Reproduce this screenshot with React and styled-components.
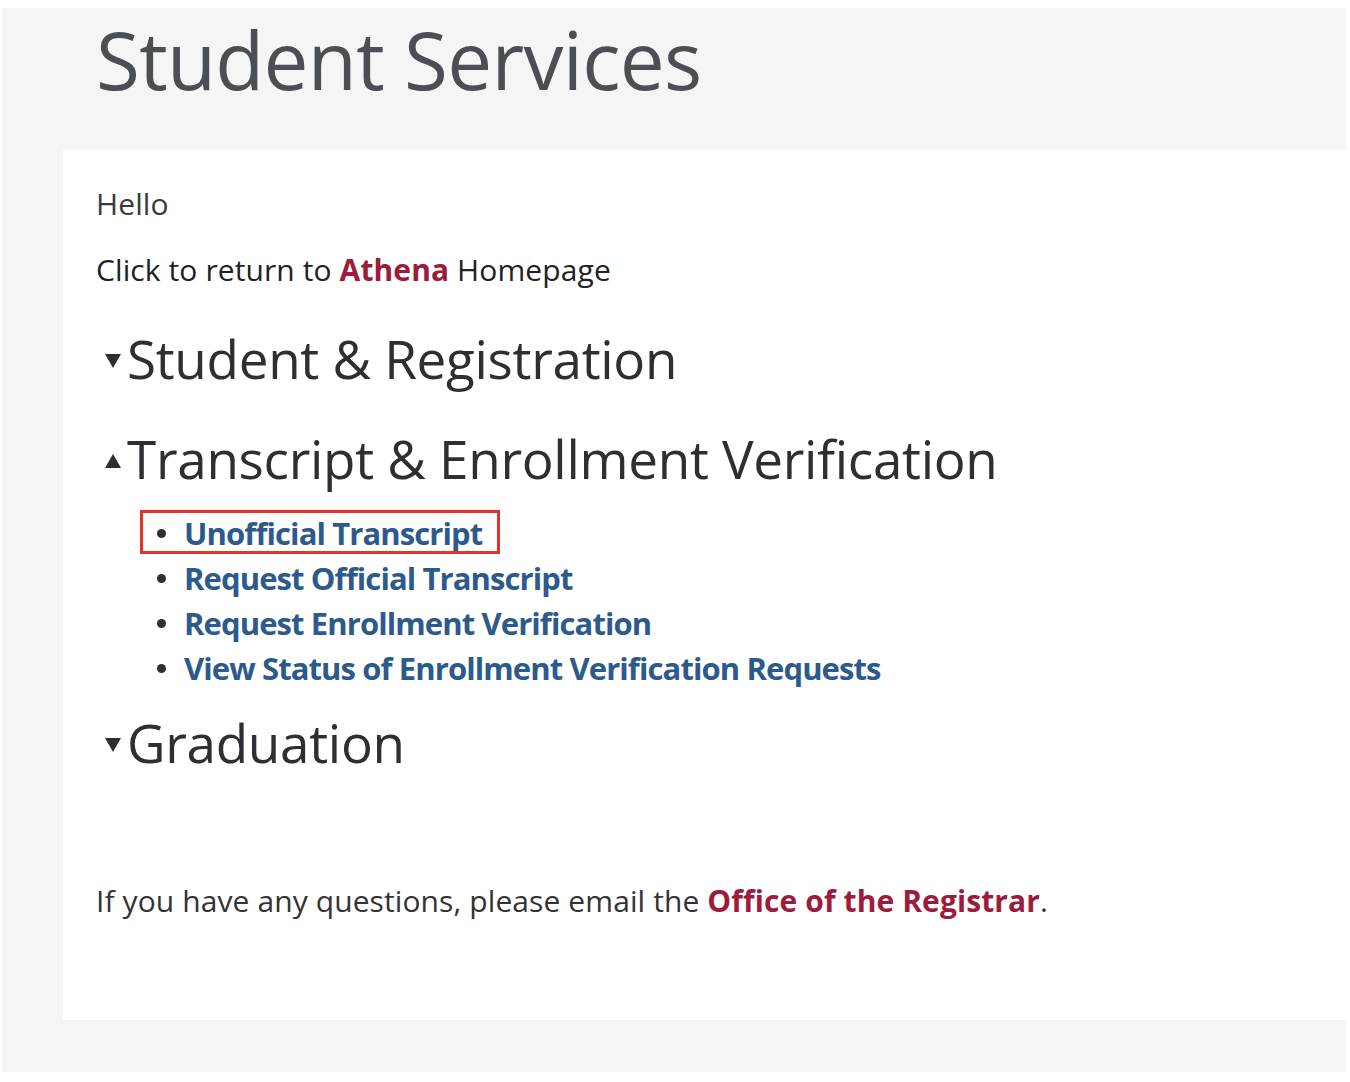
import React from "react";
import styled, { createGlobalStyle } from "styled-components";

const GlobalStyle = createGlobalStyle`
  body {
    margin: 0;
    background: #ffffff;
    font-family: "Open Sans", "Noto Sans", sans-serif;
  }
`;

const links = [
  "Unofficial Transcript",
  "Request Official Transcript",
  "Request Enrollment Verification",
  "View Status of Enrollment Verification Requests",
];

function App() {
  return (
    <>
      <GlobalStyle />
      <Shell>
        <Header>
          <Title>Student Services</Title>
        </Header>
        <Panel>
          <Greeting>Hello</Greeting>
          <Line>
            Click to return to <RedLink href="#">Athena</RedLink> Homepage
          </Line>
          <Section $gap={34}>
            <SectionHead>
              <Caret $open={false} />
              Student &amp; Registration
            </SectionHead>
          </Section>
          <Section $gap={30}>
            <SectionHead>
              <Caret $open />
              Transcript &amp; Enrollment Verification
            </SectionHead>
            <LinkList>
              {links.map((l, i) => (
                <LinkItem key={l} $marked={i === 0}>
                  <BlueLink href="#">{l}</BlueLink>
                </LinkItem>
              ))}
            </LinkList>
          </Section>
          <Section $gap={18}>
            <SectionHead>
              <Caret $open={false} />
              Graduation
            </SectionHead>
          </Section>
          <Footer>
            If you have any questions, please email the{" "}
            <RedLink href="#">Office of the Registrar</RedLink>.
          </Footer>
        </Panel>
      </Shell>
    </>
  );
}

const Shell = styled.div`
  margin: 8px 4px 0 2px;
  height: 1064px;
  background-color: #f4f6f5;
  display: flex;
  flex-direction: column;
`;

const Header = styled.div`
  height: 142px;
  padding-left: 94px;
  box-sizing: border-box;
`;

const Title = styled.h1`
  margin: 0;
  padding-top: 1px;
  font-size: 80px;
  font-weight: 400;
  line-height: 100px;
  color: #4a4f54;
  letter-spacing: -0.7px;
`;

const Panel = styled.div`
  margin-left: 61px;
  height: 870px;
  background-color: #ffffff;
  padding: 34px 0 0 33px;
  box-sizing: border-box;
  display: flex;
  flex-direction: column;
`;

const Greeting = styled.p`
  margin: 0;
  font-size: 30px;
  line-height: 40px;
  color: #3a3a3a;
  letter-spacing: 0.1px;
`;

const Line = styled.p`
  margin: 26px 0 0 0;
  font-size: 30px;
  line-height: 40px;
  color: #222;
  letter-spacing: 0.1px;
`;

const RedLink = styled.a`
  color: #9d1c3b;
  font-weight: 700;
  text-decoration: none;
`;

const Section = styled.div`
  margin-top: ${(p) => p.$gap}px;
`;

const SectionHead = styled.h2`
  margin: 0;
  display: flex;
  align-items: center;
  font-size: 53px;
  font-weight: 400;
  line-height: 70px;
  color: #2f2f33;
  letter-spacing: -0.3px;
`;

const Caret = styled.span`
  width: 0;
  height: 0;
  margin: 4px 6px 0 9px;
  border-left: 8px solid transparent;
  border-right: 8px solid transparent;
  ${(p) =>
    p.$open
      ? "border-bottom: 14px solid #2f2f33;"
      : "border-top: 14px solid #2f2f33;"}
`;

const LinkList = styled.ul`
  margin: 16px 0 0 0;
  padding: 0 0 0 88px;
  list-style: none;
`;

const LinkItem = styled.li`
  position: relative;
  height: 45px;
  display: flex;
  align-items: center;

  &::before {
    content: "";
    position: absolute;
    left: -27px;
    top: 19px;
    width: 9px;
    height: 9px;
    border-radius: 50%;
    background: #2f2f33;
  }

  ${(p) =>
    p.$marked &&
    `
    &::after {
      content: "";
      position: absolute;
      left: -44px;
      top: 0;
      width: 360px;
      height: 44px;
      box-sizing: border-box;
      border: 3px solid #e2342b;
    }
  `}
`;

const BlueLink = styled.a`
  color: #2c5a8c;
  font-size: 31px;
  font-weight: 700;
  text-decoration: none;
  letter-spacing: -0.9px;
`;

const Footer = styled.p`
  margin: 103px 0 0 0;
  font-size: 30px;
  line-height: 40px;
  color: #333;
  letter-spacing: 0.1px;
`;

export default App;
